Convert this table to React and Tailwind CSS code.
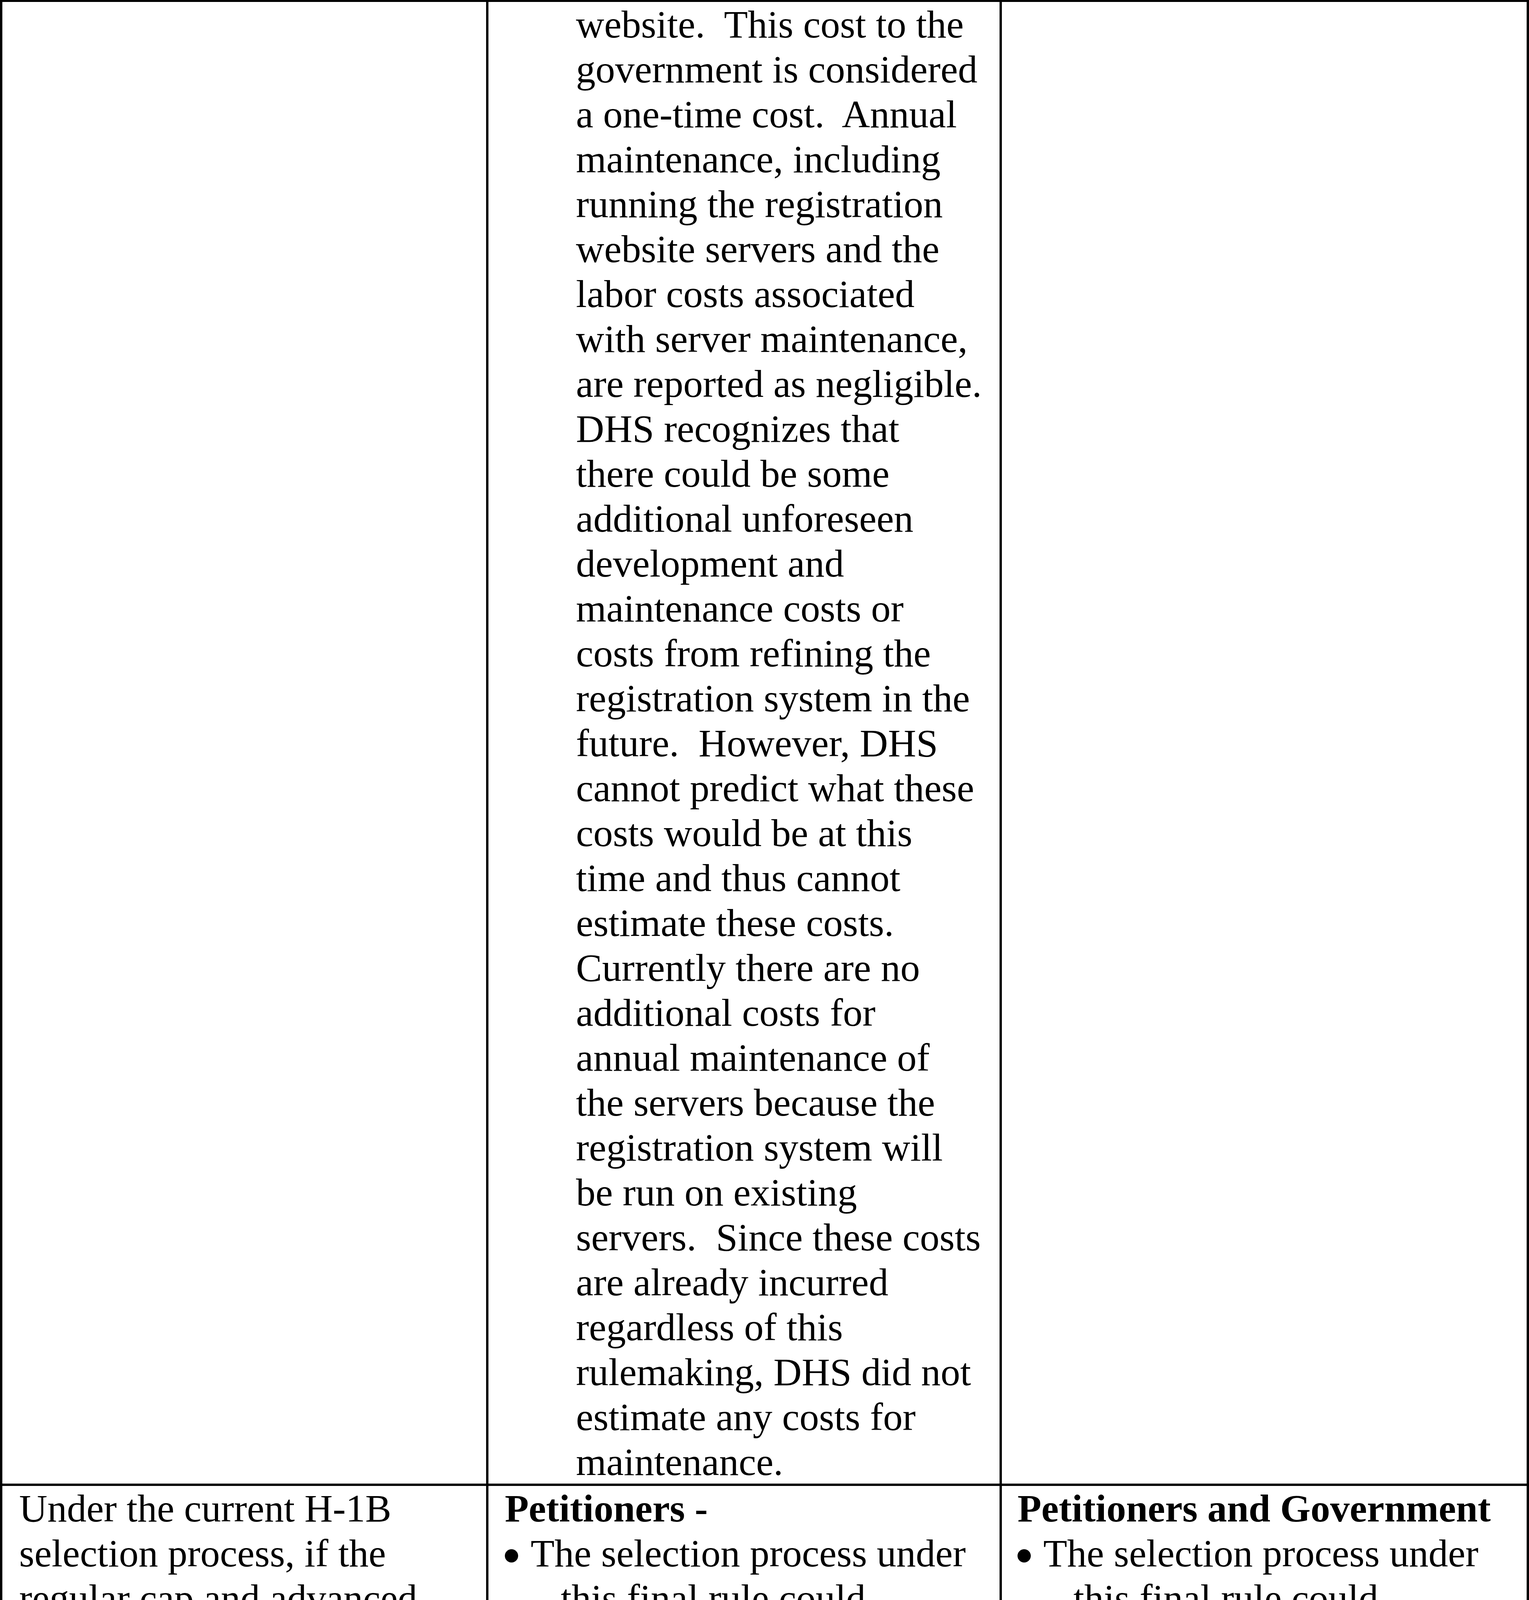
const costLines = [
  "website.  This cost to the",
  "government is considered",
  "a one-time cost.  Annual",
  "maintenance, including",
  "running the registration",
  "website servers and the",
  "labor costs associated",
  "with server maintenance,",
  "are reported as negligible.",
  "DHS recognizes that",
  "there could be some",
  "additional unforeseen",
  "development and",
  "maintenance costs or",
  "costs from refining the",
  "registration system in the",
  "future.  However, DHS",
  "cannot predict what these",
  "costs would be at this",
  "time and thus cannot",
  "estimate these costs.",
  "Currently there are no",
  "additional costs for",
  "annual maintenance of",
  "the servers because the",
  "registration system will",
  "be run on existing",
  "servers.  Since these costs",
  "are already incurred",
  "regardless of this",
  "rulemaking, DHS did not",
  "estimate any costs for",
  "maintenance.",
]

const baselineLines = [
  "Under the current H-1B",
  "selection process, if the",
  "regular cap and advanced",
  "degree exemption are",
  "reached in the first five",
  "business days that cap-",
  "subject petitions can be",
  "filed, USCIS randomly",
  "selects sufficient H-1B",
  "petitions to reach the H-1B",
  "20,000 advanced degree",
  "exemption first.  Then,",
  "USCIS randomly selects",
]

const costCell = {
  title: "Petitioners -",
  first: "The selection process under",
  rest: [
    "this final rule could",
    "decrease the number of",
    "cap-subject H-1B petitions",
    "for beneficiaries with",
    "bachelor\u2019s degrees,",
    "advanced degrees from",
    "U.S. for-profit",
    "universities, or foreign",
    "advanced degrees by up to",
    "5,340 workers.  This",
    "potential decrease could",
  ],
}

const benefitCell = {
  title: "Petitioners and Government",
  first: "The selection process under",
  rest: [
    "this final rule could",
    "increase the number of cap-",
    "subject H-1B petitions that",
    "are selected for",
    "beneficiaries with master\u2019s",
    "degrees or higher from U.S.",
    "institutions of higher",
    "education by an estimated",
    "16 percent (or 5,340",
    "workers annually).  DHS",
    "believes the increase in the",
  ],
}

function Line({ children }) {
  return <div className="h-[115px] whitespace-pre">{children}</div>
}

function BulletCell({ cell, pad }) {
  return (
    <div className={`overflow-hidden bg-white ${pad}`}>
      <Line>
        <span className="font-bold">{cell.title}</span>
      </Line>
      <div className="flex h-[115px] items-start whitespace-pre">
        <span className="w-[66px] shrink-0">
          <span className="mt-[47px] block h-[34px] w-[34px] rounded-full bg-black" />
        </span>
        <span>{cell.first}</span>
      </div>
      <div className="pl-[143px]">
        {cell.rest.map((line, i) => (
          <Line key={i}>{line}</Line>
        ))}
      </div>
    </div>
  )
}

export default function App() {
  return (
    <div className="h-[5312px] w-[3913px] overflow-hidden bg-white font-['Liberation_Sans'] text-black">
      <div className="grid grid-cols-[1238px_1308px_1343px] grid-rows-[3793px_1503px] gap-[6px] bg-black px-[6px] pt-[5px] pb-[5px] font-['Liberation_Serif',_'Times_New_Roman',_serif] text-[100px] leading-[115px]">
        <div className="bg-white" />
        <div className="overflow-hidden bg-white pl-[224px]">
          {costLines.map((line, i) => (
            <Line key={i}>{line}</Line>
          ))}
        </div>
        <div className="bg-white" />

        <div className="overflow-hidden bg-white pl-[43px]">
          {baselineLines.map((line, i) => (
            <Line key={i}>{line}</Line>
          ))}
        </div>
        <BulletCell cell={costCell} pad="pl-[42px]" />
        <BulletCell cell={benefitCell} pad="pl-[40px]" />
      </div>
    </div>
  )
}
